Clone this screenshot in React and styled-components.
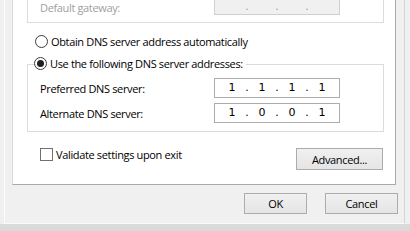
import React from "react";
import styled, { createGlobalStyle } from "styled-components";

const Global = createGlobalStyle`
  html, body {
    margin: 0;
    padding: 0;
    background: #dadada;
  }
  body {
    font-family: "Open Sans", "Noto Sans", sans-serif;
    font-size: 11px;
    letter-spacing: -0.35px;
    color: #000;
  }
`;

const Screen = styled.div`
  width: 410px;
  height: 231px;
  overflow: hidden;
  background: #dadada;
`;

const Frame = styled.div`
  height: 224px;
  padding-left: 4px;
  background: #f0f0f0;
  box-sizing: border-box;
`;

const Inner = styled.div`
  width: 401px;
  height: 224px;
  box-sizing: border-box;
  border-left: 1px solid #fbfbfb;
  border-right: 1px solid #d4d4d4;
  border-bottom: 1px solid #fbfbfb;
  padding: 0 7px 0 7px;
  display: flex;
  flex-direction: column;
`;

const Page = styled.div`
  width: 384px;
  height: 185px;
  box-sizing: border-box;
  background: #fff;
  border-left: 1px solid #d9d9d9;
  border-right: 1px solid #a9a9a9;
  border-bottom: 1px solid #a9a9a9;
  display: flex;
  flex-direction: column;
`;

const Group = styled.div`
  margin-left: 14px;
  width: 357px;
  box-sizing: border-box;
  border: 1px solid #dcdcdc;
  border-top: ${(p) => (p.$open ? "none" : "1px solid #dcdcdc")};
  margin-top: ${(p) => p.$top || 0}px;
  padding-bottom: ${(p) => (p.$open ? 7 : 8)}px;
  display: flex;
  flex-direction: column;
`;

const FieldRow = styled.div`
  display: grid;
  grid-template-columns: 174px 126px;
  align-items: center;
  height: 20px;
  padding-left: 12px;
  margin-top: ${(p) => p.$top || 0}px;
  color: ${(p) => (p.$disabled ? "#a0a0a0" : "#000")};
`;

const Label = styled.span`
  align-self: ${(p) => (p.$low ? "end" : "center")};
  line-height: ${(p) => (p.$low ? "15px" : "normal")};
`;

const IpBox = styled.div`
  height: 20px;
  box-sizing: border-box;
  border: 1px solid ${(p) => (p.$disabled ? "#cfcfcf" : "#acacac")};
  background: ${(p) => (p.$disabled ? "#f0f0f0" : "#fff")};
  display: flex;
  justify-content: center;
  align-items: center;
`;

const Octets = styled.div`
  display: grid;
  grid-template-columns: 26px 4px 26px 4px 26px 4px 26px;
  font-family: "DejaVu Sans", sans-serif;
  font-size: 11px;
  letter-spacing: 0;
  line-height: 14px;
  padding-top: ${(p) => (p.$disabled ? 4 : 0)}px;
  color: ${(p) => (p.$disabled ? "#9a9a9a" : "#000")};
  text-align: center;
`;

const Option = styled.div`
  display: flex;
  align-items: center;
  gap: 3px;
  height: 13px;
  margin-left: ${(p) => p.$left || 0}px;
  margin-top: ${(p) => p.$top || 0}px;
  white-space: nowrap;
`;

const Caption = styled(Option)`
  align-self: flex-start;
  margin-top: -8px;
  margin-left: 6px;
  padding-right: 3px;
  background: #fff;
`;

const Radio = styled.span`
  width: 13px;
  height: 13px;
  box-sizing: border-box;
  border-radius: 50%;
  border: 1px solid #3c3c3c;
  background: #fff;
  display: flex;
  align-items: center;
  justify-content: center;
  flex: none;
  &::after {
    content: "";
    width: 7px;
    height: 7px;
    border-radius: 50%;
    background: ${(p) => (p.$checked ? "#202020" : "transparent")};
  }
`;

const Check = styled.span`
  width: 13px;
  height: 13px;
  box-sizing: border-box;
  border: 1px solid #707070;
  background: #fff;
  flex: none;
`;

const BottomRow = styled.div`
  display: flex;
  justify-content: space-between;
  align-items: flex-start;
  margin-top: 16px;
  padding: 0 12px 0 27px;
`;

const Button = styled.button`
  font-family: inherit;
  font-size: 11px;
  letter-spacing: inherit;
  color: #000;
  width: ${(p) => p.$w}px;
  height: ${(p) => p.$h || 21}px;
  padding: 0;
  box-sizing: border-box;
  border: 1px solid #acacac;
  background: linear-gradient(#f0f0f0, #e5e5e5);
  border-radius: 0;
`;

const Actions = styled.div`
  display: flex;
  justify-content: flex-end;
  gap: 18px;
  margin-top: 8px;
  margin-right: -1px;
`;

const Ip = ({ value, disabled }) => {
  const parts = value.split(".");
  return (
    <IpBox $disabled={disabled}>
      <Octets $disabled={disabled}>
        <span>{parts[0]}</span>
        <span>.</span>
        <span>{parts[1]}</span>
        <span>.</span>
        <span>{parts[2]}</span>
        <span>.</span>
        <span>{parts[3]}</span>
      </Octets>
    </IpBox>
  );
};

export default function App() {
  return (
    <Screen>
      <Global />
      <Frame>
        <Inner>
          <Page>
            <Group $open>
              <FieldRow $disabled $top={-5}>
                <Label $low>Default gateway:</Label>
                <Ip value="..." disabled />
              </FieldRow>
            </Group>
            <Option $left={22} $top={12}>
              <Radio />
              <span>Obtain DNS server address automatically</span>
            </Option>
            <Group $top={16}>
              <Caption>
                <Radio $checked />
                <span>Use the following DNS server addresses:</span>
              </Caption>
              <FieldRow $top={8}>
                <Label>Preferred DNS server:</Label>
                <Ip value="1.1.1.1" />
              </FieldRow>
              <FieldRow $top={5}>
                <Label>Alternate DNS server:</Label>
                <Ip value="1.0.0.1" />
              </FieldRow>
            </Group>
            <BottomRow>
              <Option>
                <Check />
                <span>Validate settings upon exit</span>
              </Option>
              <Button $w={87} $h={22}>Advanced...</Button>
            </BottomRow>
          </Page>
          <Actions>
            <Button $w={63}>OK</Button>
            <Button $w={73}>Cancel</Button>
          </Actions>
        </Inner>
      </Frame>
    </Screen>
  );
}
